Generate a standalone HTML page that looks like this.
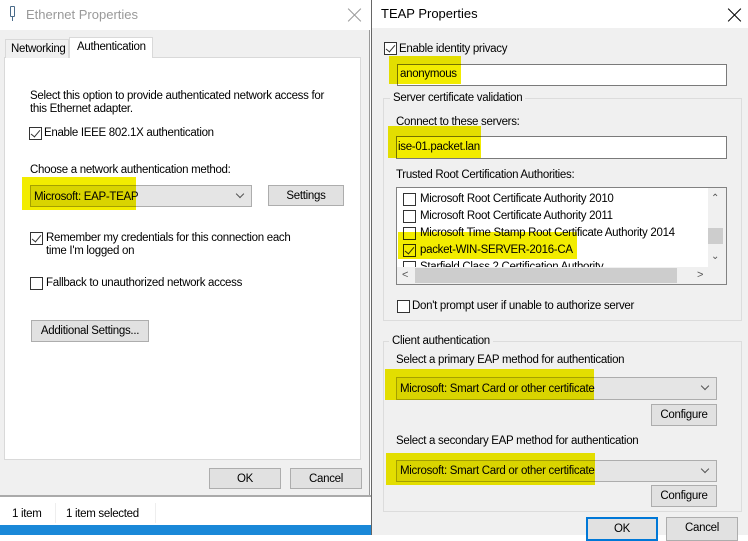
<!DOCTYPE html>
<html><head><meta charset="utf-8"><style>
*{box-sizing:border-box;margin:0;padding:0}
body{width:748px;height:535px;position:relative;overflow:hidden;background:#fff;font-family:"Liberation Sans",sans-serif;font-size:11.5px;letter-spacing:-0.3px;color:#000}
.a{position:absolute}
.t{position:absolute;white-space:nowrap;line-height:14px}
.btn{position:absolute;background:#e1e1e1;border:1px solid #adadad;text-align:center;line-height:20px}
.cb{position:absolute;width:13px;height:13px;border:1px solid #333;background:#fff}
.cb.c::after{content:"";position:absolute;left:3px;top:0px;width:4px;height:8px;border:solid #333;border-width:0 1.3px 1.3px 0;transform:rotate(40deg)}
.hl{position:absolute;background:#f2ec00;mix-blend-mode:multiply;z-index:5}
.combo{position:absolute;background:#e5e5e5;border:1px solid #adadad}
.combo .ar{position:absolute;right:8px;top:5px;width:6px;height:6px;border:solid #555;border-width:0 1px 1px 0;transform:rotate(45deg)}
.inp{position:absolute;background:#fff;border:1px solid #7a7a7a}
.grp{position:absolute;border:1px solid #dcdcdc}
.x{position:absolute;width:14px;height:14px}
.x::before,.x::after{content:"";position:absolute;left:6px;top:-2px;width:1px;height:18px;background:currentColor;transform:rotate(45deg)}
.x::after{transform:rotate(-45deg)}
</style></head><body>
<!-- left dialog -->
<div class="a" style="left:0;top:0;width:370px;height:495px;background:#f0f0f0;border-right:1px solid #999"></div>
<div class="a" style="left:0;top:0;width:370px;height:30px;background:#fff"></div>
<div class="a" style="left:10px;top:6px;width:5px;height:11px;border:1px solid #4a6b8a;border-radius:1px"></div>
<div class="a" style="left:12px;top:17px;width:1px;height:4px;background:#4a6b8a"></div>
<div class="t" style="left:26px;top:8px;font-size:13px;color:#999;letter-spacing:0">Ethernet Properties</div>
<div class="x" style="left:348px;top:8px;color:#999"></div>
<div class="a" style="left:4px;top:57px;width:357px;height:403px;background:#fff;border:1px solid #d9d9d9"></div>
<div class="a" style="left:5px;top:39px;width:64px;height:19px;background:#f0f0f0;border:1px solid #d9d9d9;border-bottom:none"></div>
<div class="t" style="left:11px;top:42px">Networking</div>
<div class="a" style="left:69px;top:37px;width:84px;height:21px;background:#fff;border:1px solid #d9d9d9;border-bottom:none"></div>
<div class="t" style="left:77px;top:40px">Authentication</div>
<div class="t" style="left:30px;top:89px">Select this option to provide authenticated network access for</div>
<div class="t" style="left:30px;top:102px">this Ethernet adapter.</div>
<div class="cb c" style="left:29px;top:127px"></div>
<div class="t" style="left:44px;top:126px">Enable IEEE 802.1X authentication</div>
<div class="t" style="left:30px;top:163px">Choose a network authentication method:</div>
<div class="combo" style="left:30px;top:185px;width:222px;height:22px"><div class="ar"></div></div>
<div class="hl" style="left:22px;top:177px;width:114px;height:33px"></div>
<div class="t" style="left:34px;top:190px">Microsoft: EAP-TEAP</div>
<div class="btn" style="left:268px;top:185px;width:76px;height:21px">Settings</div>
<div class="cb c" style="left:30px;top:232px"></div>
<div class="t" style="left:46px;top:231px">Remember my credentials for this connection each</div>
<div class="t" style="left:46px;top:244px">time I'm logged on</div>
<div class="cb" style="left:30px;top:277px"></div>
<div class="t" style="left:46px;top:276px">Fallback to unauthorized network access</div>
<div class="btn" style="left:31px;top:320px;width:118px;height:22px">Additional Settings...</div>
<div class="btn" style="left:209px;top:468px;width:72px;height:21px">OK</div>
<div class="btn" style="left:290px;top:468px;width:72px;height:21px">Cancel</div>
<div class="a" style="left:0;top:495px;width:371px;height:2px;background:#aaa"></div>
<div class="t" style="left:12px;top:507px">1 item</div>
<div class="a" style="left:55px;top:503px;width:1px;height:20px;background:#eee"></div>
<div class="t" style="left:66px;top:507px">1 item selected</div>
<div class="a" style="left:155px;top:503px;width:1px;height:20px;background:#eee"></div>
<div class="a" style="left:0;top:525px;width:372px;height:10px;background:#1a88d8"></div>
<!-- right dialog -->
<div class="a" style="left:371px;top:0;width:377px;height:535px;background:#f0f0f0;border-left:1px solid #666"></div>
<div class="a" style="left:372px;top:0;width:376px;height:28px;background:#fff"></div>
<div class="t" style="left:381px;top:7px;font-size:13px;letter-spacing:0">TEAP Properties</div>
<div class="x" style="left:728px;top:8px;color:#000"></div>
<div class="cb c" style="left:384px;top:42px"></div>
<div class="t" style="left:399px;top:42px">Enable identity privacy</div>
<div class="inp" style="left:397px;top:64px;width:330px;height:22px"></div>
<div class="hl" style="left:389px;top:56px;width:72px;height:28px"></div>
<div class="t" style="left:400px;top:67px">anonymous</div>
<div class="grp" style="left:383px;top:98px;width:359px;height:223px"></div>
<div class="t" style="left:390px;top:91px;background:#f0f0f0;padding:0 3px">Server certificate validation</div>
<div class="t" style="left:396px;top:115px">Connect to these servers:</div>
<div class="inp" style="left:396px;top:136px;width:331px;height:23px"></div>
<div class="hl" style="left:388px;top:126px;width:93px;height:32px"></div>
<div class="t" style="left:398px;top:140px">ise-01.packet.lan</div>
<div class="t" style="left:396px;top:168px">Trusted Root Certification Authorities:</div>
<div class="a" style="left:396px;top:187px;width:331px;height:98px;background:#fff;border:1px solid #828282;overflow:hidden">
 <div class="cb" style="left:6px;top:5px"></div><div class="t" style="left:23px;top:4px">Microsoft Root Certificate Authority 2010</div>
 <div class="cb" style="left:6px;top:22px"></div><div class="t" style="left:23px;top:21px">Microsoft Root Certificate Authority 2011</div>
 <div class="cb" style="left:6px;top:39px"></div><div class="t" style="left:23px;top:38px">Microsoft Time Stamp Root Certificate Authority 2014</div>
 <div class="cb c" style="left:6px;top:56px"></div><div class="t" style="left:23px;top:55px">packet-WIN-SERVER-2016-CA</div>
 <div class="cb" style="left:6px;top:73px"></div><div class="t" style="left:23px;top:72px">Starfield Class 2 Certification Authority</div>
 <div class="a" style="left:0;top:79px;width:329px;height:17px;background:#f0f0f0"></div>
 <div class="a" style="left:18px;top:80px;width:262px;height:15px;background:#cdcdcd"></div>
 <div class="t" style="left:5px;top:80px;font-size:11px;color:#555">&lt;</div>
 <div class="t" style="left:300px;top:80px;font-size:11px;color:#555">&gt;</div>
 <div class="a" style="left:311px;top:0;width:18px;height:79px;background:#f0f0f0"></div>
 <div class="a" style="left:311px;top:40px;width:15px;height:16px;background:#cdcdcd"></div>
 <div class="t" style="left:314px;top:4px;font-size:10px;color:#555">⌃</div>
 <div class="t" style="left:314px;top:62px;font-size:10px;color:#555">⌄</div>
</div>
<div class="hl" style="left:398px;top:232px;width:179px;height:27px"></div>
<div class="cb" style="left:397px;top:300px"></div>
<div class="t" style="left:412px;top:299px">Don't prompt user if unable to authorize server</div>
<div class="grp" style="left:383px;top:341px;width:359px;height:171px"></div>
<div class="t" style="left:389px;top:334px;background:#f0f0f0;padding:0 3px">Client authentication</div>
<div class="t" style="left:396px;top:353px">Select a primary EAP method for authentication</div>
<div class="combo" style="left:396px;top:377px;width:321px;height:23px"><div class="ar"></div></div>
<div class="hl" style="left:385px;top:369px;width:209px;height:31px"></div>
<div class="t" style="left:400px;top:382px">Microsoft: Smart Card or other certificate</div>
<div class="btn" style="left:651px;top:404px;width:66px;height:22px">Configure</div>
<div class="t" style="left:396px;top:434px">Select a secondary EAP method for authentication</div>
<div class="combo" style="left:396px;top:460px;width:321px;height:22px"><div class="ar"></div></div>
<div class="hl" style="left:386px;top:453px;width:209px;height:32px"></div>
<div class="t" style="left:400px;top:464px">Microsoft: Smart Card or other certificate</div>
<div class="btn" style="left:651px;top:485px;width:66px;height:22px">Configure</div>
<div class="btn" style="left:586px;top:517px;width:72px;height:24px;border:2px solid #0078d7">OK</div>
<div class="btn" style="left:666px;top:517px;width:72px;height:24px">Cancel</div>
</body></html>
